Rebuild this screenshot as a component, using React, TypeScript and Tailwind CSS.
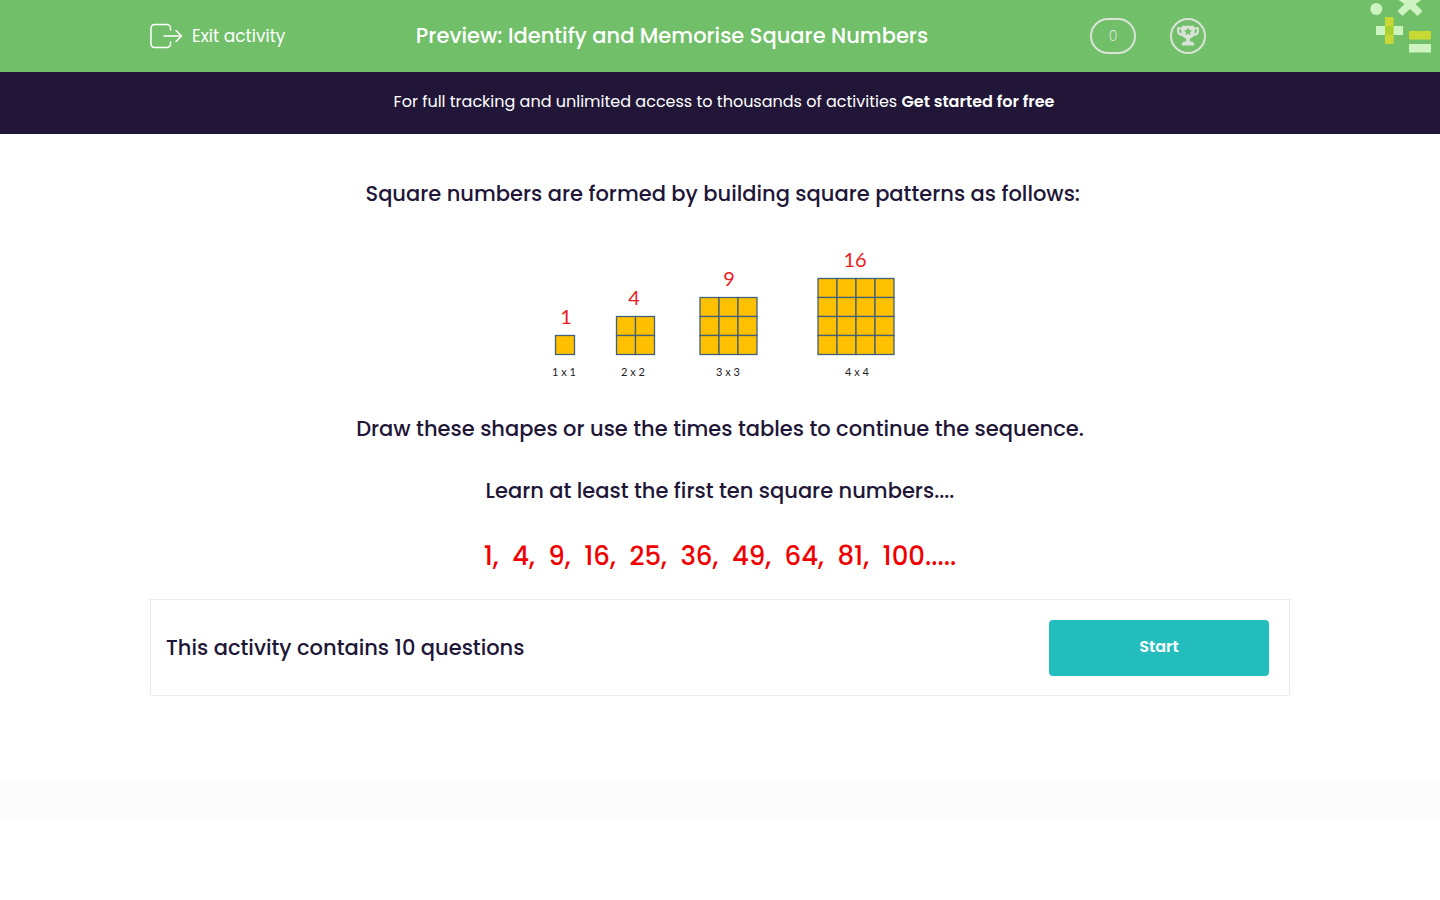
const patterns = [
  { size: 1, x: 15.5, total: "1", totalX: 26, labelX: 24 },
  { size: 2, x: 76.5, total: "4", totalX: 94, labelX: 93 },
  { size: 3, x: 160, total: "9", totalX: 189, labelX: 188 },
  { size: 4, x: 278, total: "16", totalX: 315, labelX: 317 },
];

const CELL = 19;
const BASE = 114;

function ExitIcon() {
  return (
    <svg width="33" height="26" viewBox="0 0 33 26" fill="none" stroke="currentColor" strokeWidth="1.5" strokeLinecap="round" strokeLinejoin="round" aria-hidden="true">
      <path d="M20.500 7V5a3.500 3.500 0 0 0-3.500-3.500H4.500A3.500 3.500 0 0 0 1 5v16a3.500 3.500 0 0 0 3.500 3.500H17a3.500 3.500 0 0 0 3.500-3.500v-2" />
      <path d="M14 13h17.500M26 7.500l5.500 5.500-5.500 5.500" />
    </svg>
  );
}

function TrophyIcon() {
  return (
    <svg width="24" height="22" viewBox="0 0 24 22" fill="currentColor" aria-hidden="true">
      <path
        fillRule="evenodd"
        d="M6 .8h12v1.400h5v4c0 3-2.300 4.700-5.500 5-.9 1.300-2.100 2-3.700 2.400v3h1.700c1 0 1.500.5 1.500 1.300h1.200v2.600H5.800v-2.600H7c0-.8.5-1.300 1.500-1.300h1.700v-3c-1.600-.4-2.800-1.100-3.700-2.400-3.200-.3-5.500-2-5.500-5v-4h5V.8ZM3.200 4.500v1.700c0 1.100.9 2 2.300 2.400-.2-1.200-.2-2.700-.1-4.100H3.200Zm17.600 0h-2.200c.1 1.400.1 2.900-.1 4.100 1.400-.4 2.300-1.300 2.300-2.400V4.500ZM12 2.600l-1.200 2.500-2.800.4 2 1.900-.5 2.700 2.500-1.300 2.500 1.300-.5-2.700 2-1.900-2.800-.4L12 2.600Z"
      />
    </svg>
  );
}

function MathsDecoration() {
  return (
    <svg className="absolute right-0 top-0" width="72" height="56" viewBox="0 0 72 56" aria-hidden="true">
      <circle cx="8.300" cy="9" r="6" fill="#cdf3c0" />
      <path d="M34.300-5 42-1l7.700-4 4.500 4.500L47.500 4l7 7-5 5-7.500-7-7.500 7-5-5 7-7-6.700-4.500z" fill="#cdf3c0" />
      <path d="M8 26h27v9H8z" fill="#cdf3c0" />
      <path d="M17 17h8.500v27H17z" fill="#c8d936" />
      <path d="M17 26h8.500v9H17z" fill="#a9d02c" />
      <path d="M41 31h22v8.500H41z" fill="#c8d936" />
      <path d="M41 44h22v8.500H41z" fill="#cdf3c0" />
    </svg>
  );
}

function SquarePatterns() {
  return (
    <svg className="mx-auto mt-[31px] mb-[23px] block font-[Lato,sans-serif]" width="360" height="151" viewBox="0 0 360 151" textAnchor="middle" role="img" aria-label="Square patterns from 1 x 1 to 4 x 4">
      {patterns.map(({ size, x, total, totalX, labelX }) => {
        const top = BASE - size * CELL;
        return (
          <g key={size}>
            <text x={totalX} y={top - 11} fontSize="20" fontWeight="400" fill="#ed1c24">{total}</text>
            {Array.from({ length: size * size }, (_, i) => (
              <rect
                key={i}
                x={x + (i % size) * CELL}
                y={top + Math.floor(i / size) * CELL + 0.5}
                width={CELL}
                height={CELL}
                fill="#ffc000"
                stroke="#41607a"
                strokeWidth="1.3"
              />
            ))}
            <text x={labelX} y="136" fontSize="11" fontWeight="400" fill="#222222">{`${size} x ${size}`}</text>
          </g>
        );
      })}
    </svg>
  );
}

function Header() {
  return (
    <header className="relative bg-[#72bf6a] text-white">
      <div className="mx-auto flex h-[72px] max-w-[1140px] items-center">
        <a href="#" className="flex w-36 shrink-0 items-center gap-[9px] whitespace-nowrap text-[17px] leading-6">
          <ExitIcon />
          Exit activity
        </a>
        <h1 className="flex-1 text-center text-[21px] font-medium leading-[30px]">
          Preview: Identify and Memorise Square Numbers
        </h1>
        <div className="flex w-60 shrink-0 items-center gap-[34px] pl-10 text-[#d9e3d8]">
          <span className="flex h-9 w-[46px] items-center justify-center rounded-full border-2 border-current text-sm font-light">0</span>
          <span className="flex size-9 items-center justify-center rounded-full border-2 border-current">
            <TrophyIcon />
          </span>
        </div>
      </div>
      <MathsDecoration />
    </header>
  );
}

export default function App() {
  return (
    <div className="bg-white font-[Poppins,Inter,sans-serif] text-[#211637]">
      <Header />
      <div className="bg-[#211637] pt-[18px] pb-5 pl-2 text-center text-base leading-6 text-white">
        For full tracking and unlimited access to thousands of activities{" "}
        <a href="#" className="font-semibold">Get started for free</a>
      </div>
      <main className="mx-auto max-w-[1140px] pt-[45px] pb-[85px]">
        <div className="text-center text-[21px] font-medium leading-[30px]">
          <p>&nbsp;Square numbers are formed by building square patterns as follows:</p>
          <SquarePatterns />
          <p>Draw these shapes or use the times tables to continue the sequence.</p>
          <p className="mt-8">Learn at least the first ten square numbers....</p>
          <p className="mt-8 whitespace-pre-wrap text-[26px] leading-9 text-[#f00000]">
            {"1,  4,  9,  16,  25,  36,  49,  64,  81,  100....."}
          </p>
        </div>
        <section className="mt-[25px] flex items-center justify-between border border-[#ececec] pt-5 pr-5 pb-[19px] pl-[15px]">
          <p className="text-[21px] font-medium leading-[30px]">This activity contains 10 questions</p>
          <button type="button" className="h-14 w-[220px] rounded bg-[#24bdbe] pb-0.5 text-base font-semibold text-white">
            Start
          </button>
        </section>
      </main>
      <footer className="h-[38px] bg-[#fbfbfb]" />
    </div>
  );
}
